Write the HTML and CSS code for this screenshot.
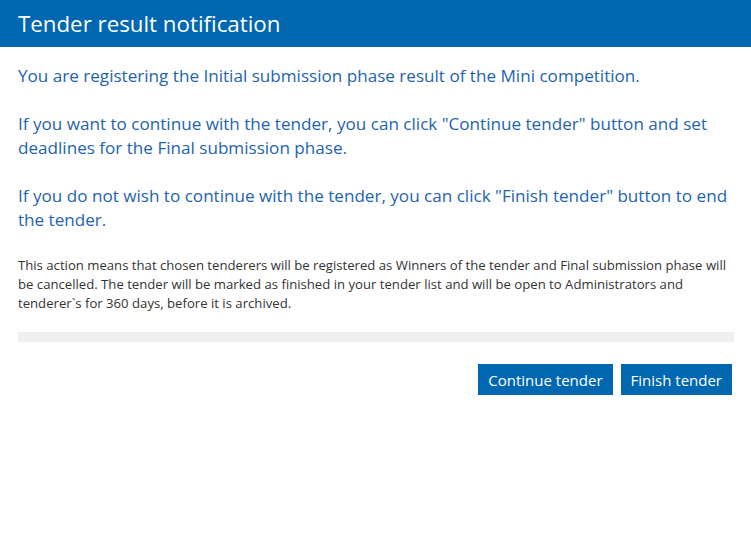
FILE: index.html
```html
<!DOCTYPE html>
<html lang="en">
<head>
<meta charset="utf-8">
<title>Tender result notification</title>
<link rel="stylesheet" href="styles.css">
</head>
<body>
<div class="modal">
  <header class="modal-header">
    <h1 class="modal-title">Tender result notification</h1>
  </header>
  <div class="modal-body">
    <p class="lead">You are registering the Initial submission phase result of the Mini competition.</p>
    <p class="lead">If you want to continue with the tender, you can click "Continue tender" button and set deadlines for the Final submission phase.</p>
    <p class="lead">If you do not wish to continue with the tender, you can click "Finish tender" button to end the tender.</p>
    <p class="note">This action means that chosen tenderers will be registered as Winners of the tender and Final submission phase will be cancelled. The tender will be marked as finished in your tender list and will be open to Administrators and tenderer`s for 360 days, before it is archived.</p>
    <div class="divider"></div>
    <div class="actions">
      <button class="btn">Continue tender</button>
      <button class="btn">Finish tender</button>
    </div>
  </div>
</div>
</body>
</html>
```
FILE: styles.css
```css
html, body {
  margin: 0;
  padding: 0;
  background: #ffffff;
}
body {
  font-family: "Open Sans", "Noto Sans", sans-serif;
}
.modal-header {
  background: #0067b0;
  height: 47px;
  display: flex;
  align-items: center;
  padding: 0 18px;
}
.modal-title {
  margin: 0;
  color: #ffffff;
  font-size: 22.3px;
  font-weight: 400;
}
.modal-body {
  padding: 17px 17px 0 18px;
}
.lead {
  margin: 0 0 24px;
  color: #1e64ae;
  font-size: 17.1px;
  line-height: 24px;
}
.note {
  margin: 0;
  color: #333333;
  font-size: 13.15px;
  line-height: 19px;
}
.divider {
  height: 10px;
  background: #efeff0;
  margin-top: 19px;
}
.actions {
  display: flex;
  justify-content: flex-end;
  gap: 8px;
  margin-top: 22px;
  padding-right: 2px;
}
.btn {
  background: #0067b0;
  color: #ffffff;
  border: 0;
  font-family: "Open Sans", "Noto Sans", sans-serif;
  font-size: 15px;
  height: 31px;
  padding: 0 10px;
  cursor: pointer;
}
```
